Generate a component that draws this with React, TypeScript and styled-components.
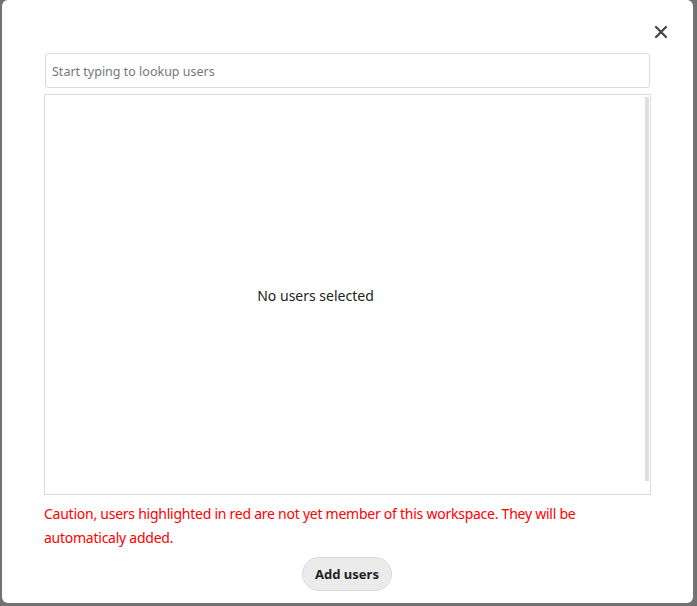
import React from "react";
import styled, { createGlobalStyle } from "styled-components";

const Global = createGlobalStyle`
  html, body {
    margin: 0;
    padding: 0;
    background: #727272;
    font-family: "Noto Sans", "Open Sans", sans-serif;
  }
  * { box-sizing: border-box; }
`;

const Backdrop = styled.div`
  width: 697px;
  height: 606px;
  background: #727272;
  padding-left: 2px;
  overflow: hidden;
`;

const Modal = styled.div`
  width: 691px;
  height: 603px;
  background: #fff;
  border-radius: 6px;
  padding: 20px 42px 0 42px;
  display: flex;
  flex-direction: column;
`;

const Header = styled.div`
  display: flex;
  justify-content: flex-end;
  height: 24px;
  margin-right: -22px;
  margin-bottom: 9px;
`;

const CloseButton = styled.button`
  border: none;
  background: none;
  padding: 0;
  width: 24px;
  height: 24px;
  display: flex;
  align-items: center;
  justify-content: center;
  cursor: pointer;
`;

const SearchInput = styled.input`
  margin-left: 1px;
  width: 605px;
  height: 35px;
  border: 1px solid #dcdcdc;
  border-radius: 3px;
  padding: 1px 6px 0 6px;
  font-family: inherit;
  font-size: 12.5px;
  color: #333;
  outline: none;
  &::placeholder { color: #777; }
`;

const ListBox = styled.div`
  margin-top: 6px;
  width: 607px;
  height: 401px;
  border: 1px solid #dcdcdc;
  display: flex;
  align-items: center;
  justify-content: center;
  position: relative;
`;

const Scrollbar = styled.div`
  position: absolute;
  right: 1px;
  top: 2px;
  width: 4px;
  height: 384px;
  background: #dedede;
`;

const Empty = styled.span`
  font-size: 14px;
  color: #222;
  margin-left: -64px;
  margin-top: 2px;
`;

const Caution = styled.p`
  margin: 7px 0 0 0;
  font-size: 14px;
  letter-spacing: -0.25px;
  line-height: 24px;
  color: #ff0000;
  width: 560px;
`;

const Footer = styled.div`
  display: flex;
  justify-content: center;
  margin-top: 7px;
  padding-right: 1px;
`;

const AddButton = styled.button`
  height: 34px;
  padding: 0 12px;
  border-radius: 17px;
  border: 1px solid #dadada;
  background: #ebebeb;
  font-family: inherit;
  font-size: 13px;
  font-weight: 700;
  color: #222;
  cursor: pointer;
`;

export default function App() {
  return (
    <>
      <Global />
      <Backdrop>
        <Modal>
          <Header>
            <CloseButton aria-label="Close">
              <svg width="12" height="12" viewBox="0 0 12 12">
                <path d="M1 1L11 11M11 1L1 11" stroke="#444" strokeWidth="2.2" strokeLinecap="square" />
              </svg>
            </CloseButton>
          </Header>
          <SearchInput placeholder="Start typing to lookup users" />
          <ListBox>
            <Empty>No users selected</Empty>
            <Scrollbar />
          </ListBox>
          <Caution>
            Caution, users highlighted in red are not yet member of this workspace. They will be automaticaly added.
          </Caution>
          <Footer>
            <AddButton>Add users</AddButton>
          </Footer>
        </Modal>
      </Backdrop>
    </>
  );
}
